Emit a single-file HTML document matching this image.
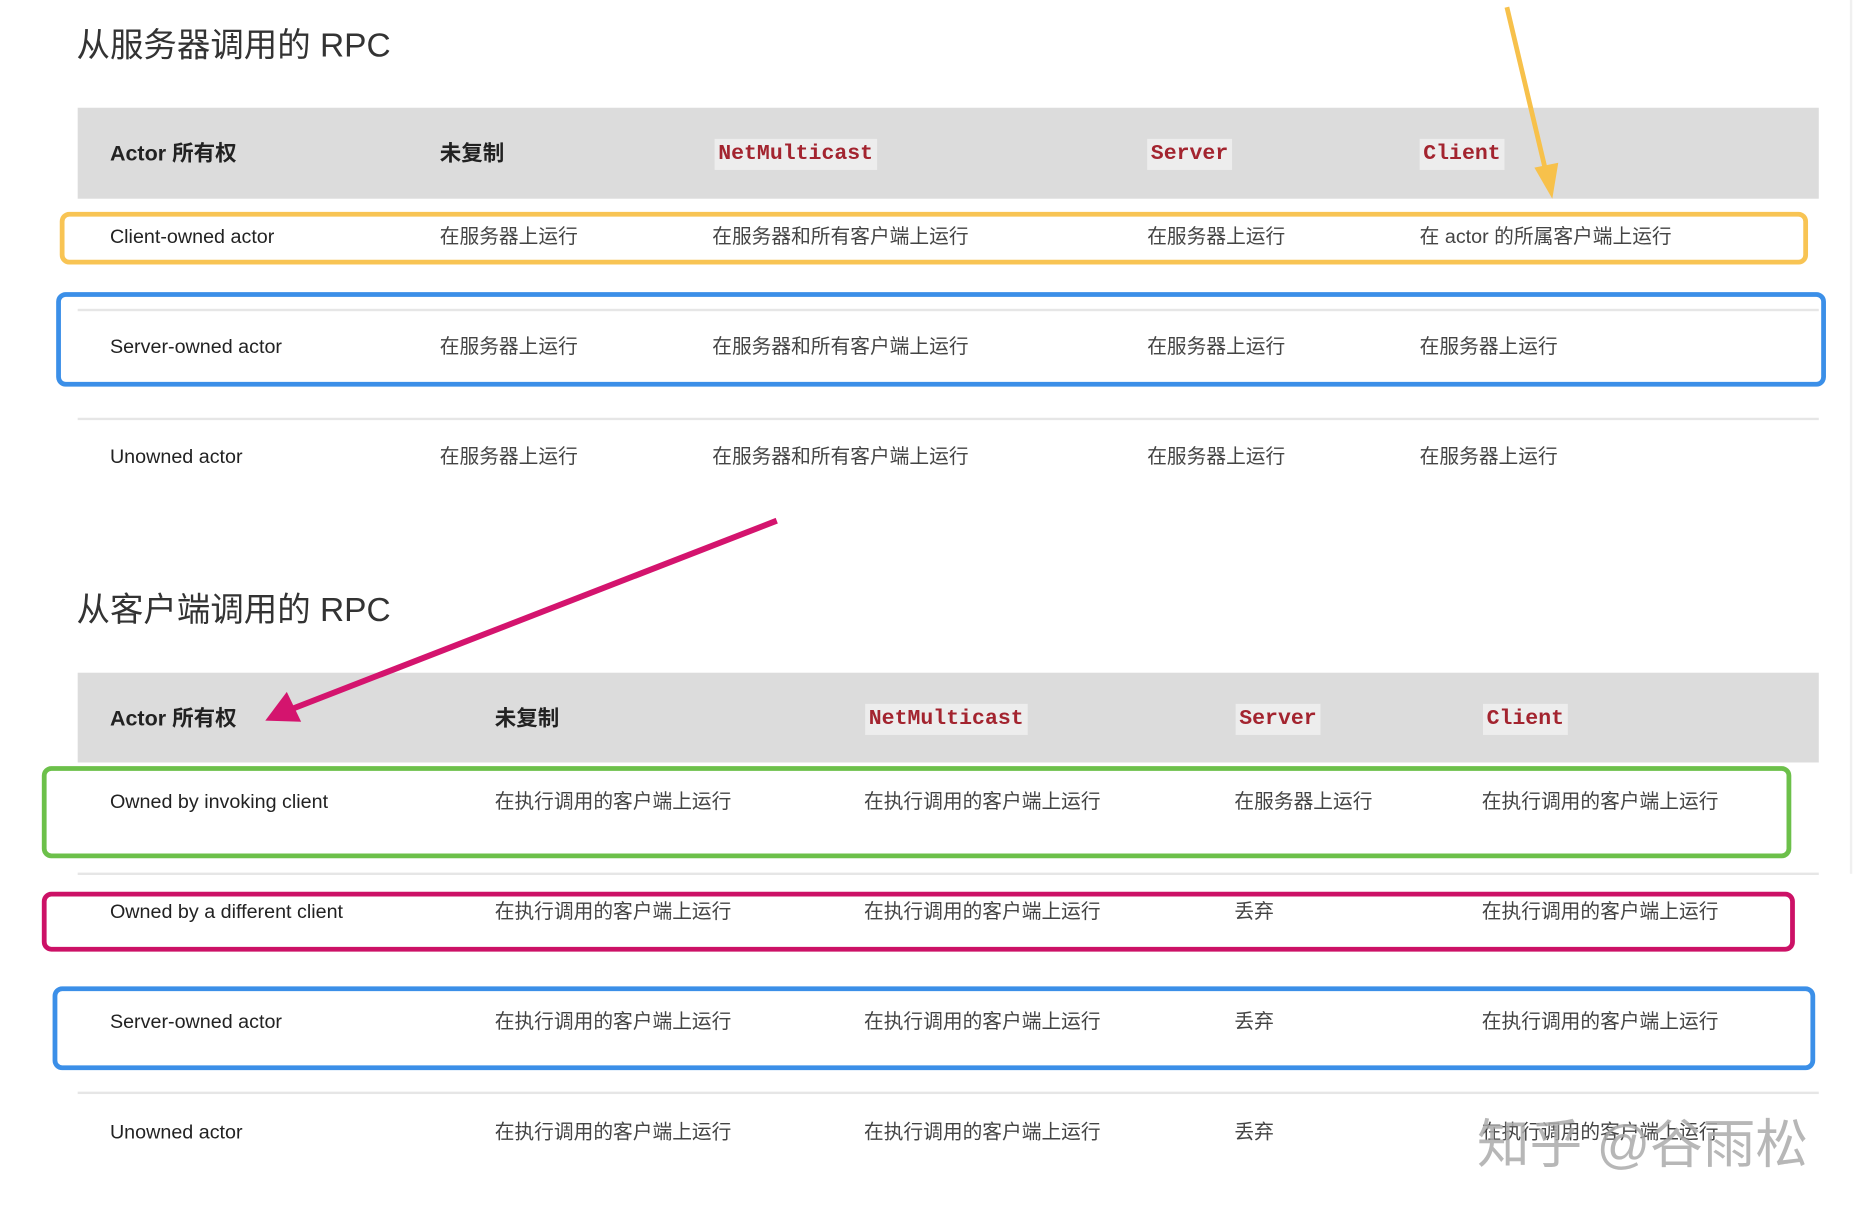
<!DOCTYPE html>
<html><head><meta charset="utf-8"><style>
html,body{margin:0;padding:0;background:#fff;width:1871px;height:1209px;overflow:hidden}
#w{position:absolute;left:0;top:0;width:1566px;height:1010px;transform:scale(1.195,1.197);transform-origin:0 0;font-family:"Liberation Sans","Noto Sans CJK SC",sans-serif;color:#333}
.t{position:absolute;font-size:16.5px;white-space:nowrap;line-height:20px;color:#444}
.b{font-weight:bold;color:#222}
.h{position:absolute;font-size:28px;color:#333;white-space:nowrap}
.c{position:absolute;font-family:"Liberation Mono",monospace;font-weight:bold;font-size:18px;color:#a3242f;background:#ededed;padding:2px 3px;line-height:22px}
.g{position:absolute;background:#dcdcdc;left:65px;width:1457px}
.l{position:absolute;left:65px;width:1457px;height:2px;background:#e6e6e6}
.box{position:absolute;border-style:solid;border-width:4px;border-radius:8px}
</style></head><body><div id="w">
<div style="position:absolute;left:1548px;top:0;width:2px;height:730px;background:#f0f0f0"></div>
<div class="h" style="left:64px;top:16px">从服务器调用的 RPC</div>
<div class="g" style="top:90px;height:76px"></div>
<div class="t b" style="left:92px;top:118px;font-size:18px">Actor 所有权</div>
<div class="t b" style="left:368px;top:118px;font-size:18px">未复制</div>
<div class="c" style="left:598px;top:116px">NetMulticast</div>
<div class="c" style="left:960px;top:116px">Server</div>
<div class="c" style="left:1188px;top:116px">Client</div>

<div class="box" style="left:50px;top:177px;width:1455px;height:36px;border-color:#f8c454"></div>
<div class="t" style="left:92px;top:188px;color:#222">Client-owned actor</div>
<div class="t" style="left:368px;top:188px">在服务器上运行</div>
<div class="t" style="left:596px;top:188px">在服务器和所有客户端上运行</div>
<div class="t" style="left:960px;top:188px">在服务器上运行</div>
<div class="t" style="left:1188px;top:188px">在 actor 的所属客户端上运行</div>

<div class="l" style="top:258px"></div>
<div class="box" style="left:47px;top:244px;width:1473px;height:71px;border-color:#3b8fe8"></div>
<div class="t" style="left:92px;top:280px;color:#222">Server-owned actor</div>
<div class="t" style="left:368px;top:280px">在服务器上运行</div>
<div class="t" style="left:596px;top:280px">在服务器和所有客户端上运行</div>
<div class="t" style="left:960px;top:280px">在服务器上运行</div>
<div class="t" style="left:1188px;top:280px">在服务器上运行</div>

<div class="l" style="top:349px"></div>
<div class="t" style="left:92px;top:372px;color:#222">Unowned actor</div>
<div class="t" style="left:368px;top:372px">在服务器上运行</div>
<div class="t" style="left:596px;top:372px">在服务器和所有客户端上运行</div>
<div class="t" style="left:960px;top:372px">在服务器上运行</div>
<div class="t" style="left:1188px;top:372px">在服务器上运行</div>

<div class="h" style="left:64px;top:488px">从客户端调用的 RPC</div>
<div class="g" style="top:562px;height:75px"></div>
<div class="t b" style="left:92px;top:590px;font-size:18px">Actor 所有权</div>
<div class="t b" style="left:414px;top:590px;font-size:18px">未复制</div>
<div class="c" style="left:724px;top:588px">NetMulticast</div>
<div class="c" style="left:1034px;top:588px">Server</div>
<div class="c" style="left:1241px;top:588px">Client</div>

<div class="box" style="left:35px;top:640px;width:1456px;height:69px;border-color:#6cc04a"></div>
<div class="t" style="left:92px;top:660px;color:#222">Owned by invoking client</div>
<div class="t" style="left:414px;top:660px">在执行调用的客户端上运行</div>
<div class="t" style="left:723px;top:660px">在执行调用的客户端上运行</div>
<div class="t" style="left:1033px;top:660px">在服务器上运行</div>
<div class="t" style="left:1240px;top:660px">在执行调用的客户端上运行</div>

<div class="l" style="top:729px"></div>
<div class="box" style="left:35px;top:745px;width:1459px;height:42px;border-color:#cc1166"></div>
<div class="t" style="left:92px;top:752px;color:#222">Owned by a different client</div>
<div class="t" style="left:414px;top:752px">在执行调用的客户端上运行</div>
<div class="t" style="left:723px;top:752px">在执行调用的客户端上运行</div>
<div class="t" style="left:1033px;top:752px">丢弃</div>
<div class="t" style="left:1240px;top:752px">在执行调用的客户端上运行</div>

<div class="box" style="left:44px;top:824px;width:1467px;height:62px;border-color:#3b8fe8"></div>
<div class="t" style="left:92px;top:844px;color:#222">Server-owned actor</div>
<div class="t" style="left:414px;top:844px">在执行调用的客户端上运行</div>
<div class="t" style="left:723px;top:844px">在执行调用的客户端上运行</div>
<div class="t" style="left:1033px;top:844px">丢弃</div>
<div class="t" style="left:1240px;top:844px">在执行调用的客户端上运行</div>

<div class="l" style="top:912px"></div>
<div class="t" style="left:92px;top:936px;color:#222">Unowned actor</div>
<div class="t" style="left:414px;top:936px">在执行调用的客户端上运行</div>
<div class="t" style="left:723px;top:936px">在执行调用的客户端上运行</div>
<div class="t" style="left:1033px;top:936px">丢弃</div>
<div class="t" style="left:1240px;top:936px">在执行调用的客户端上运行</div>
<div style="position:absolute;left:1236px;top:920px;font-size:44px;color:rgba(170,170,170,0.85);white-space:nowrap;font-family:'Liberation Sans','Noto Sans CJK SC',sans-serif">知乎 @谷雨松</div>

<svg style="position:absolute;left:0;top:0" width="1566" height="1010">
<line x1="1261" y1="6" x2="1294" y2="145" stroke="#f7c14b" stroke-width="4"/>
<polygon points="1284,140 1304,136 1299,166" fill="#f7c14b"/>
<line x1="650" y1="435" x2="245" y2="592" stroke="#d4146e" stroke-width="5"/>
<polygon points="222,602 240,578 252,603" fill="#d4146e"/>
</svg>
</div></body></html>
